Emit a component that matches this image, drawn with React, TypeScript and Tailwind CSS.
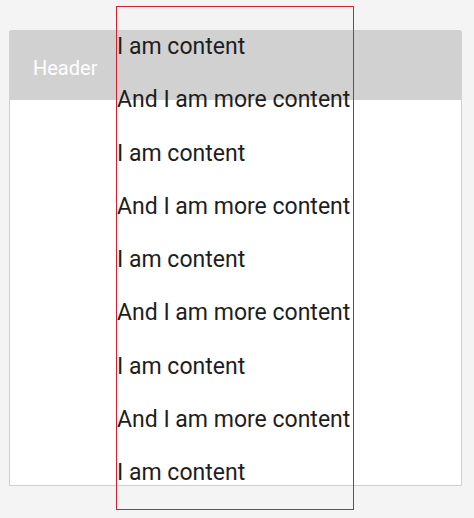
import React from "react";

const lines = [
  "I am content",
  "And I am more content",
  "I am content",
  "And I am more content",
  "I am content",
  "And I am more content",
  "I am content",
  "And I am more content",
  "I am content",
];

export default function App() {
  return (
    <div className="relative w-[474px] h-[518px] bg-[#f4f4f4] overflow-hidden" style={{ fontFamily: "Roboto, 'Noto Sans', sans-serif" }}>
      <div className="pt-[30px] pl-[9px]">
        <div className="w-[453px] h-[456px] bg-white border border-[#cfcfcf] rounded-t-[3px] flex flex-col">
          <div className="h-[70px] bg-[#d1d1d1] flex items-center pl-[24px] -mx-px -mt-px rounded-t-[3px]">
            <span className="text-white text-[20px] leading-none pt-[6px]">Header</span>
          </div>
        </div>
      </div>
      <div className="absolute left-[116px] top-[6px] w-[238px] border border-[#d3202e] flex flex-col gap-[26px] pt-[26px] pb-[23px]">
        {lines.map((t, i) => (
          <div key={i} className="text-[23px] leading-[27.25px] text-[#1e1e1e] whitespace-nowrap">
            {t}
          </div>
        ))}
      </div>
    </div>
  );
}
